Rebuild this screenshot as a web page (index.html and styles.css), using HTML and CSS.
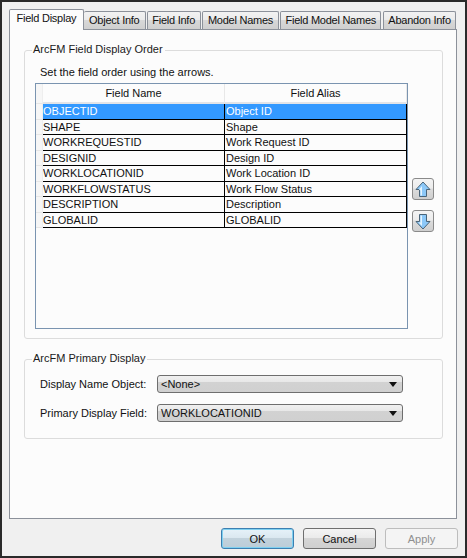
FILE: index.html
```html
<!DOCTYPE html>
<html lang="en">
<head>
  <meta charset="UTF-8" />
  <title>Field Display</title>
  <link rel="stylesheet" href="styles.css">
</head>
<body>

  <div class="dialog">
    <div class="tabs">
      <div class="tab active">Field Display</div>
      <div class="tab t-object">Object Info</div>
      <div class="tab t-field">Field Info</div>
      <div class="tab t-model">Model Names</div>
      <div class="tab t-fmodel">Field Model Names</div>
      <div class="tab t-abandon">Abandon Info</div>
    </div>

    <div class="pane">
      <fieldset class="group order-group">
        <legend>ArcFM Field Display Order</legend>
        <div class="hint">Set the field order using the arrows.</div>
        <div class="order-row">
          <table class="fields">
            <thead>
              <tr><th class="gutter"></th><th>Field Name</th><th>Field Alias</th></tr>
            </thead>
            <tbody>
              <tr class="selected"><td class="gutter"></td><td>OBJECTID</td><td>Object ID</td></tr>
              <tr><td class="gutter"></td><td>SHAPE</td><td>Shape</td></tr>
              <tr><td class="gutter"></td><td>WORKREQUESTID</td><td>Work Request ID</td></tr>
              <tr><td class="gutter"></td><td>DESIGNID</td><td>Design ID</td></tr>
              <tr><td class="gutter"></td><td>WORKLOCATIONID</td><td>Work Location ID</td></tr>
              <tr><td class="gutter"></td><td>WORKFLOWSTATUS</td><td>Work Flow Status</td></tr>
              <tr><td class="gutter"></td><td>DESCRIPTION</td><td>Description</td></tr>
              <tr><td class="gutter"></td><td>GLOBALID</td><td>GLOBALID</td></tr>
            </tbody>
          </table>
          <div class="arrows">
            <button class="arrow" type="button" aria-label="Move up">
              <svg width="16" height="17" viewBox="0 0 16 17"><path d="M8 1 15 8.500H11.500V15.500H4.500V8.500H1Z" fill="#8cc8f8" stroke="#4a6478"/><path d="M5.500 9.500V14.500H7V5L4 8.500Z" fill="#e4f3fd"/></svg>
            </button>
            <button class="arrow" type="button" aria-label="Move down">
              <svg width="16" height="17" viewBox="0 0 16 17"><path d="M8 16 15 8.500H11.500V1.500H4.500V8.500H1Z" fill="#8cc8f8" stroke="#4a6478"/><path d="M5.500 2.500V9.500H3.500L7 13V2.500Z" fill="#e4f3fd"/></svg>
            </button>
          </div>
        </div>
      </fieldset>

      <fieldset class="group primary-group">
        <legend>ArcFM Primary Display</legend>
        <div class="combo-row">
          <label>Display Name Object:</label>
          <div class="combo"><span>&lt;None&gt;</span><i class="caret"></i></div>
        </div>
        <div class="combo-row">
          <label>Primary Display Field:</label>
          <div class="combo"><span>WORKLOCATIONID</span><i class="caret"></i></div>
        </div>
      </fieldset>
    </div>

    <div class="buttons">
      <button class="btn default" type="button">OK</button>
      <button class="btn" type="button">Cancel</button>
      <button class="btn disabled" type="button" disabled>Apply</button>
    </div>
  </div>

</body>
</html>
```

FILE: styles.css
```css
* {
  box-sizing: border-box;
}

html, body {
  margin: 0;
  height: 100%;
  background-color: #fff;
}

body {
  font-family: "Liberation Sans", Arial, sans-serif;
  font-size: 11px;
  color: #111;
}

.dialog {
  width: 467px;
  height: 558px;
  background-color: #f0f0f0;
  border: 2px solid #2a2a2a;
  padding: 7px 8px 0 7px;
}

.tabs {
  display: flex;
  height: 20px;
  align-items: flex-end;
  position: relative;
  z-index: 1;
}

.tab {
  height: 18px;
  margin-right: 1px;
  text-align: center;
  line-height: 17px;
  letter-spacing: -0.25px;
  border: 1px solid #8c919a;
  border-bottom: none;
  border-radius: 2px 2px 0 0;
  background: linear-gradient(#f2f2f2 0, #ebebeb 45%, #d8d8d8 50%, #cfcfcf 100%);
  white-space: nowrap;
}

.tab.active {
  width: 75px;
  height: 21px;
  margin-right: 0;
  margin-bottom: -1px;
  line-height: 17px;
  background: #fcfcfc;
}

.t-object { width: 62px; border-left: none; }
.t-field { width: 54px; }
.t-model { width: 78px; }
.t-fmodel { width: 101px; }
.t-abandon { width: 73px; margin-left: 1px; }

.pane {
  width: 448px;
  height: 490px;
  padding: 13px 14px 0 14px;
  background-color: #fcfcfc;
  border: 1px solid #8c919a;
}

.group {
  margin: 0;
  padding: 0;
  border: 1px solid #dcdcdc;
  border-radius: 3px;
  min-width: 0;
}

.group legend {
  margin-left: -3px;
  padding: 0 2px 2px 1px;
  color: #1a1a1a;
}

.order-group {
  width: 419px;
  height: 296px;
  padding: 8px 0 0 10px;
}

.hint {
  margin-left: 5px;
  height: 14px;
  line-height: 14px;
}

.order-row {
  display: flex;
  align-items: flex-start;
  margin-top: 4px;
}

.fields {
  width: 373px;
  height: 246px;
  display: block;
  background-color: #fcfcfc;
  border: 1px solid #7a94b0;
}

.fields thead,
.fields tbody {
  display: block;
}

.fields tr {
  display: flex;
  height: 15.5px;
}

.fields thead tr {
  height: 20px;
}

.fields th {
  font-weight: normal;
  line-height: 18px;
  text-align: center;
  padding: 0;
  border-right: 1px solid #e8e8e8;
  border-bottom: 2px solid #e2e4e8;
}

.fields th,
.fields td {
  width: 182px;
  white-space: nowrap;
  overflow: hidden;
}

.fields td {
  line-height: 14px;
  padding: 0;
  border-right: 1px solid #000;
  border-bottom: 1px solid #000;
}

.fields td:last-child {
  padding-left: 1px;
}

.fields th.gutter,
.fields td.gutter {
  width: 7px;
  flex: none;
  padding: 0;
  background-color: #f6f6f6;
  border-right: 1px solid #eee;
  border-bottom: 1px solid #e6e6e6;
}

.selected td {
  background-color: #3399ff;
  color: #fff;
}

.arrows {
  display: flex;
  flex-direction: column;
  gap: 10px;
  margin: 95px 0 0 4px;
}

.arrow {
  width: 22px;
  height: 22px;
  padding: 0;
  display: flex;
  align-items: center;
  justify-content: center;
  border: 1px solid #8a8a8a;
  border-radius: 3px;
  background: linear-gradient(#f4f4f4 0, #ececec 45%, #dcdcdc 50%, #cfcfcf 100%);
}

.primary-group {
  width: 419px;
  height: 87px;
  margin-top: 13px;
  padding: 9px 0 0 15px;
}

.primary-group legend {
  margin-left: -8px;
}

.combo-row {
  display: flex;
  align-items: center;
  height: 18px;
  margin-bottom: 11px;
}

.combo-row label {
  width: 117px;
  flex: none;
  white-space: nowrap;
}

.combo {
  width: 246px;
  height: 18px;
  padding: 0 4px 0 3px;
  display: flex;
  align-items: center;
  justify-content: space-between;
  border: 1px solid #6e6e6e;
  border-radius: 3px;
  background: linear-gradient(#f0f0f0 0, #e8e8e8 35%, #d2d2d2 40%, #d0d0d0 100%);
}

.caret {
  width: 0;
  height: 0;
  margin-right: 1px;
  border-left: 4px solid transparent;
  border-right: 4px solid transparent;
  border-top: 5px solid #111;
}

.buttons {
  display: flex;
  justify-content: flex-end;
  gap: 9px;
  margin: 9px -1px 0 0;
}

.btn {
  width: 73px;
  height: 21px;
  padding: 0;
  font: inherit;
  color: #111;
  border: 1px solid #6f6f6f;
  border-radius: 3px;
  background: linear-gradient(#f4f4f4 0, #ebebeb 45%, #d6d6d6 50%, #cfcfcf 100%);
}

.btn.default {
  border-color: #3c7fb1;
  background: linear-gradient(#e6f2f9 0, #dbe8f0 45%, #c2d2dc 50%, #bccdd8 100%);
  box-shadow: inset 0 0 0 1px #7fd0f0;
}

.btn.disabled {
  color: #8f8f8f;
  border-color: #bdbdbd;
  background: #f4f4f4;
}
```
